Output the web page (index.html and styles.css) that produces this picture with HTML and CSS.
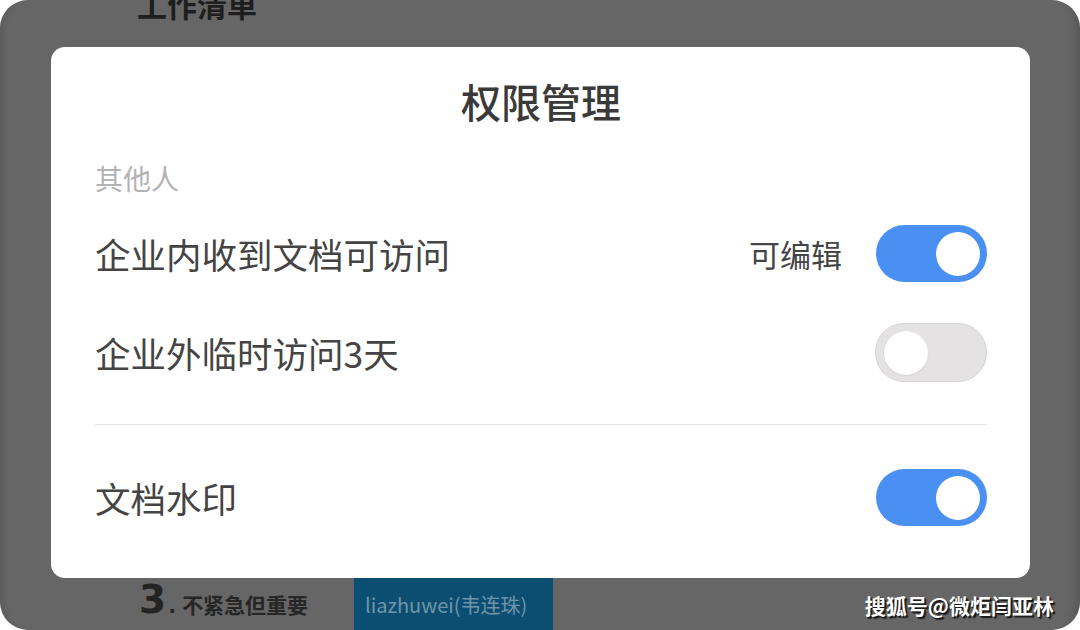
FILE: index.html
```html
<!DOCTYPE html>
<html lang="zh-CN">
<head>
<meta charset="utf-8">
<title>权限管理</title>
<link rel="stylesheet" href="styles.css">
</head>
<body>
<div class="screen">
  <div class="page">
    <h2 class="page-title">工作清单</h2>
    <div class="task-row">
      <div class="task-name"><span class="task-no">3</span><span class="task-dot">.</span>不紧急但重要</div>
      <div class="task-owner">liazhuwei(韦连珠)</div>
      <div class="task-rest"></div>
    </div>
  </div>

  <div class="dialog">
    <h1 class="dialog-title">权限管理</h1>
    <div class="section-label">其他人</div>

    <div class="setting-row">
      <span class="setting-name">企业内收到文档可访问</span>
      <span class="setting-value">可编辑</span>
      <span class="switch is-on"><span class="knob"></span></span>
    </div>
    <div class="setting-row">
      <span class="setting-name">企业外临时访问3天</span>
      <span class="switch is-off"><span class="knob"></span></span>
    </div>

    <div class="divider"></div>

    <div class="setting-row setting-row-last">
      <span class="setting-name">文档水印</span>
      <span class="switch is-on"><span class="knob"></span></span>
    </div>
  </div>

  <div class="watermark">搜狐号@微炬闫亚林</div>
</div>
</body>
</html>
```

FILE: styles.css
```css
html, body {
  margin: 0;
  padding: 0;
  background: #ffffff;
}

body {
  font-family: "Noto Sans CJK SC", "Noto Sans", sans-serif;
}

.screen {
  position: relative;
  width: 1080px;
  height: 630px;
  border-radius: 28px;
  background: #666666;
  overflow: hidden;
  box-shadow: inset 9px 0 6px -6px rgba(0, 0, 0, 0.12), inset -18px 0 8px -14px rgba(0, 0, 0, 0.15);
}

/* dimmed page underneath the dialog */
.page {
  height: 100%;
  display: flex;
  flex-direction: column;
  justify-content: space-between;
}

.page-title {
  margin: -11px 0 0 0;
  padding-left: 137px;
  font-size: 30px;
  line-height: 30px;
  font-weight: 700;
  color: #1e1e1e;
}

.task-row {
  display: grid;
  grid-template-columns: 354px 199px 1fr;
  height: 58px;
}

.task-name {
  display: flex;
  align-items: baseline;
  padding: 8px 0 0 139px;
  font-size: 21px;
  font-weight: 700;
  color: #262626;
}

.task-no {
  font-size: 39px;
  line-height: 40px;
  font-weight: 700;
  font-family: "DejaVu Sans", sans-serif;
  color: #232323;
}

.task-dot {
  margin: 0 6px 0 2px;
  font-family: "DejaVu Sans", sans-serif;
}

.task-owner {
  background: #0c4e71;
  color: #6f95aa;
  font-size: 20px;
  line-height: 20px;
  padding: 23px 0 0 11px;
  font-family: "Noto Sans CJK SC", sans-serif;
}

/* permission dialog */
.dialog {
  position: absolute;
  left: 51px;
  top: 47px;
  width: 979px;
  box-sizing: border-box;
  padding: 26px 43px 31px 44px;
  background: #ffffff;
  border-radius: 14px;
}

.dialog-title {
  margin: 0;
  text-align: center;
  font-size: 40px;
  line-height: 56px;
  font-weight: 500;
  color: #3a3a3a;
}

.section-label {
  margin-top: 31px;
  font-size: 28px;
  line-height: 36px;
  color: #b3b3b3;
}

.setting-row {
  display: flex;
  align-items: center;
  height: 99px;
}

.section-label + .setting-row {
  margin-top: 8px;
}

.setting-name {
  flex: 1;
  font-size: 35.5px;
  line-height: 44px;
  color: #444444;
}

.setting-value {
  margin-right: 34px;
  font-size: 31px;
  line-height: 40px;
  color: #444444;
}

.divider {
  margin-top: 22px;
  height: 1px;
  background: #e6e6e6;
}

.setting-row-last {
  margin-top: 23px;
}

.switch {
  display: flex;
  align-items: center;
  box-sizing: border-box;
  width: 111px;
  height: 57px;
  border-radius: 29px;
}

.switch .knob {
  width: 44px;
  height: 44px;
  border-radius: 50%;
  background: #ffffff;
}

.switch.is-on {
  justify-content: flex-end;
  padding: 0 7px;
  background: #4a90f2;
}

.switch.is-off {
  justify-content: flex-start;
  width: 112px;
  height: 59px;
  padding: 0 8px;
  background: #e4e2e3;
  border: 1.5px solid #d6d6d6;
}

.switch.is-off .knob {
  box-shadow: 0 1px 2px rgba(0, 0, 0, 0.08);
}

.watermark {
  position: absolute;
  right: 26px;
  bottom: 10px;
  font-size: 21px;
  line-height: 30px;
  font-weight: 700;
  color: #ffffff;
  text-shadow: 1px 1px 0 #1a1a1a, 2px 2px 1px #1a1a1a;
}
```
